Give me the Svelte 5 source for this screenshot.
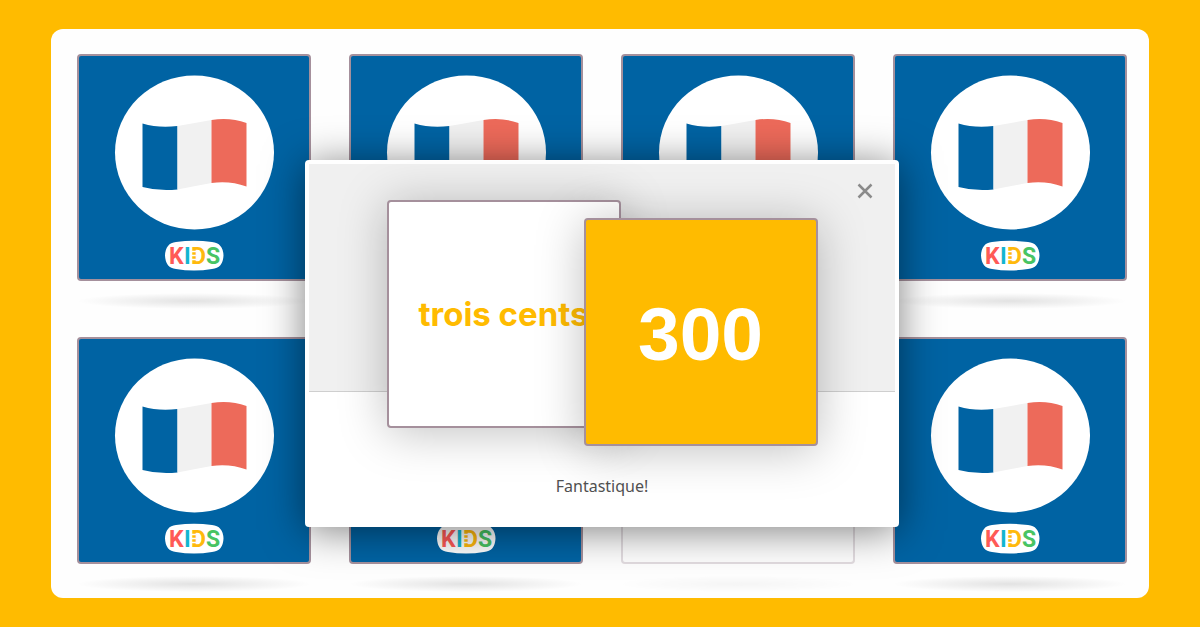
<script lang="ts">
	type Card = { id: number; matched: boolean };

	const cards: Card[] = Array.from({ length: 8 }, (_, i) => ({ id: i + 1, matched: i === 6 }));

	let open = $state(true);

	function handleClose() {
		open = false;
	}
</script>

<main class="page">
	<section class="board" aria-label="Memory">
		<ul class="board__grid">
			{#each cards as card (card.id)}
				<li class="slot" class:slot--matched={card.matched}>
					<button class="card" type="button" aria-label="Carte {card.id}" disabled={card.matched}>
						<svg class="card__art" viewBox="0 0 230 223" aria-hidden="true">
							{#if !card.matched}
								<ellipse cx="115.5" cy="96.5" rx="79.5" ry="77" fill="#fff" />
								<path d="M63.500 67.5Q80 72.500 98.500 70V133.500Q80 135.500 63.500 131Z" fill="#0063a3" />
								<path d="M98.500 70Q116 67 132.500 64V127Q116 130 98.500 133.500Z" fill="#f1f1f1" />
								<path d="M132.500 64Q151 61 167.500 67V130.500Q151 124.500 132.500 127Z" fill="#ed6a5a" />
								<path
									d="M97 186Q115 183.500 133 186Q144 187 144.500 199.500Q144 212 133 213Q115 216 97 213Q86.500 212 86 199.500Q86.500 187 97 186Z"
									fill="#fff"
								/>
								<g class="kids">
									<text x="90" y="208" fill="#ff5a56">K</text>
									<text x="105" y="208" fill="#12b5d0">I</text>
									<text x="112" y="208" fill="#ffb90c">D</text>
									<text x="127" y="208" fill="#48c463">S</text>
								</g>
								<path d="M112 195.500H117M112 199.500H117M112 203.500H117" stroke="#fff" stroke-width="1.500" />
							{/if}
						</svg>
					</button>
					<div class="slot__shadow"></div>
				</li>
			{/each}
		</ul>

		{#if open}
			<div class="overlay">
				<div class="modal" role="dialog" aria-labelledby="modal-message">
					<div class="modal__top">
						<div class="face face--word">trois cents</div>
						<div class="face face--number">300</div>
					</div>
					<p class="modal__message" id="modal-message">Fantastique!</p>
					<button class="modal__close" type="button" aria-label="Fermer" onclick={handleClose}>
						<svg viewBox="0 0 16 16" width="16" height="16" aria-hidden="true">
							<path d="M1.500 1.500L14.500 14.500M14.500 1.500L1.500 14.500" stroke="#8b8b8b" stroke-width="2.500" />
						</svg>
					</button>
				</div>
			</div>
		{/if}
	</section>
</main>

<style>
	:global(body) {
		background: #ffbb00;
	}

	.page {
		padding: 29px 51px;
	}

	.board {
		position: relative;
		padding: 25px 22px 6px 26px;
		background: #fefefe;
		border-radius: 12px;
		overflow: hidden;
	}

	.board__grid {
		display: grid;
		grid-template-columns: repeat(4, 1fr);
		gap: 28px 38px;
		margin: 0;
		padding: 0;
		list-style: none;
	}

	.card {
		display: block;
		box-sizing: border-box;
		width: 100%;
		padding: 0;
		background: #0063a3;
		border: 2px solid #a5909c;
		border-radius: 4px;
		cursor: pointer;
	}

	.card__art {
		display: block;
		width: 100%;
	}

	.kids {
		font-family: Roboto, 'Liberation Sans', sans-serif;
		font-size: 23px;
		font-weight: 700;
	}

	.slot__shadow {
		height: 16px;
		margin-top: 12px;
		background: radial-gradient(closest-side, rgba(0, 0, 0, 0.11), rgba(0, 0, 0, 0));
	}

	.slot--matched {
		opacity: 0.3;
	}

	.slot--matched .card {
		background: #fff;
		cursor: default;
	}

	.overlay {
		position: absolute;
		inset: 0;
		display: flex;
		justify-content: center;
		align-items: flex-start;
		padding: 131px 0 0 4px;
	}

	.modal {
		position: relative;
		box-sizing: border-box;
		width: 594px;
		max-width: 100%;
		background: #fff;
		border: 4px solid #fff;
		border-radius: 4px;
		box-shadow: 0 4px 40px rgba(0, 0, 0, 0.5);
	}

	.modal__top {
		display: flex;
		justify-content: center;
		align-items: flex-start;
		box-sizing: border-box;
		height: 228px;
		padding-top: 36px;
		background: #f0f0f0;
		border-bottom: 1px solid #cfcfcf;
	}

	.face {
		display: flex;
		justify-content: center;
		align-items: center;
		box-sizing: border-box;
		flex: none;
		width: 234px;
		height: 228px;
		border: 2px solid #a5909c;
		border-radius: 4px;
		box-shadow: 0 4px 48px rgba(0, 0, 0, 0.25);
		white-space: nowrap;
	}

	.face--word {
		background: #fff;
		color: #ffbb00;
		font: 700 33px/44px Inter, sans-serif;
	}

	.face--number {
		margin: 18px 0 0 -37px;
		padding-top: 4px;
		background: #ffbb00;
		color: #fff;
		font: 700 75px/80px 'Liberation Sans', sans-serif;
	}

	.modal__message {
		position: relative;
		margin: 0;
		padding: 82px 0 25px;
		color: #505050;
		font: 400 16px/24px 'Noto Sans', sans-serif;
		text-align: center;
	}

	.modal__close {
		position: absolute;
		top: 15px;
		right: 18px;
		display: flex;
		padding: 4px;
		background: none;
		border: none;
		cursor: pointer;
	}
</style>
